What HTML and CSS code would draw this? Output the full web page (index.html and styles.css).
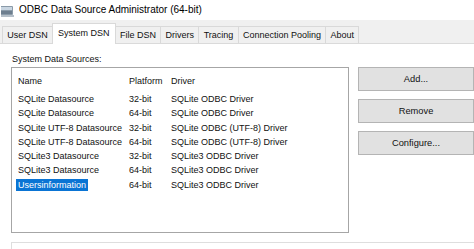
FILE: index.html
```html
<!DOCTYPE html>
<html lang="en">
<head>
    <meta charset="UTF-8">
    <meta name="viewport" content="width=device-width, initial-scale=1.0">
    <title>ODBC Data Source Administrator (64-bit)</title>
    <link rel="stylesheet" href="styles.css">
</head>
<body>
    <div class="titlebar">
        <svg class="app-icon" width="16" height="12" viewBox="0 0 16 12">
            <rect x="-2" y="1" width="14" height="9" rx="1" fill="#8a9aa8"/>
            <rect x="-1" y="2" width="12" height="3" fill="#c9d6e2"/>
            <rect x="-1" y="6" width="12" height="3" fill="#6d7e8e"/>
            <rect x="-2" y="10" width="15" height="2" fill="#b5bfc8"/>
        </svg>
        <span class="title">ODBC Data Source Administrator (64-bit)</span>
    </div>

    <div class="tabstrip">
        <div class="tab first">User DSN</div>
        <div class="tab active">System DSN</div>
        <div class="tab">File DSN</div>
        <div class="tab">Drivers</div>
        <div class="tab">Tracing</div>
        <div class="tab">Connection Pooling</div>
        <div class="tab">About</div>
    </div>

    <div class="panel">
        <div class="label">System Data Sources:</div>
        <div class="spacer"></div>

        <div class="listbox">
            <div class="row head">
                <span>Name</span>
                <span>Platform</span>
                <span>Driver</span>
            </div>
            <div class="row">
                <span>SQLite Datasource</span>
                <span>32-bit</span>
                <span>SQLite ODBC Driver</span>
            </div>
            <div class="row">
                <span>SQLite Datasource</span>
                <span>64-bit</span>
                <span>SQLite ODBC Driver</span>
            </div>
            <div class="row">
                <span>SQLite UTF-8 Datasource</span>
                <span>32-bit</span>
                <span>SQLite ODBC (UTF-8) Driver</span>
            </div>
            <div class="row">
                <span>SQLite UTF-8 Datasource</span>
                <span>64-bit</span>
                <span>SQLite ODBC (UTF-8) Driver</span>
            </div>
            <div class="row">
                <span>SQLite3 Datasource</span>
                <span>32-bit</span>
                <span>SQLite3 ODBC Driver</span>
            </div>
            <div class="row">
                <span>SQLite3 Datasource</span>
                <span>64-bit</span>
                <span>SQLite3 ODBC Driver</span>
            </div>
            <div class="row">
                <span><em class="selected">Usersinformation</em></span>
                <span>64-bit</span>
                <span>SQLite3 ODBC Driver</span>
            </div>
        </div>

        <div class="buttons">
            <button class="btn">Add...</button>
            <button class="btn">Remove</button>
            <button class="btn">Configure...</button>
        </div>

        <div class="infobox"></div>
    </div>
</body>
</html>
```

FILE: styles.css
```css
html,
body {
    margin: 0;
    padding: 0;
    height: 249px;
    overflow: hidden;
}

body {
    font-family: "Liberation Sans", Arial, sans-serif;
    font-size: 9px;
    color: #111;
    background: #fff;
}

/* Barra de titulo */
.titlebar {
    height: 20px;
    display: flex;
    align-items: center;
    background: #fff;
}

.app-icon {
    margin-left: 1px;
    margin-right: 2px;
    margin-top: 2px;
}

.title {
    font-size: 10px;
    color: #000;
    margin-top: -2px;
}

/* Pestanas */
.tabstrip {
    height: 24px;
    background: #f0f0f0;
    border-bottom: 1px solid #dadada;
    display: flex;
    align-items: flex-end;
    padding-left: 2px;
    box-sizing: border-box;
}

.tab {
    height: 17px;
    line-height: 16px;
    padding: 0 4.3px;
    border: 1px solid #d9d9d9;
    border-bottom: none;
    border-left: none;
    background: #f0f0f0;
    box-sizing: border-box;
    white-space: nowrap;
}

.tab.first {
    border-left: 1px solid #d9d9d9;
}

.tab.active {
    height: 21px;
    line-height: 18px;
    padding: 0 5px;
    background: #fff;
    border-left: 1px solid #d9d9d9;
    margin-bottom: -1px;
    margin-left: -1px;
    position: relative;
}

/* Contenido */
.panel {
    display: grid;
    grid-template-columns: 338px 116px;
    column-gap: 9px;
    padding: 9px 0 0 11px;
}

.label {
    height: 14px;
    line-height: 13px;
    padding-left: 1px;
}

.listbox {
    grid-column: 1;
    grid-row: 2;
    height: 166px;
    border: 1px solid #a6a6a6;
    box-sizing: border-box;
    background: #fff;
}

.row {
    display: grid;
    grid-template-columns: 111px 42px 1fr;
    height: 14.3px;
    line-height: 14.3px;
    white-space: nowrap;
}

.row span {
    padding-left: 6px;
}

.row.head {
    height: 24px;
    line-height: 26px;
}

.selected {
    font-style: normal;
    background: #0a74d4;
    color: #fff;
    margin-left: -2px;
    padding: 1px 2px 1px 2px;
}

/* Botones */
.buttons {
    grid-column: 2;
    grid-row: 2;
    display: flex;
    flex-direction: column;
    gap: 8px;
}

.btn {
    height: 24px;
    font-family: inherit;
    font-size: 9.3px;
    color: #111;
    background: #e1e1e1;
    border: 1px solid #b4b4b4;
    padding: 0;
}

.infobox {
    grid-column: 1 / 3;
    margin-top: 9px;
    height: 6px;
    border-top: 1px solid #dedede;
    border-left: 1px solid #dedede;
}
```
